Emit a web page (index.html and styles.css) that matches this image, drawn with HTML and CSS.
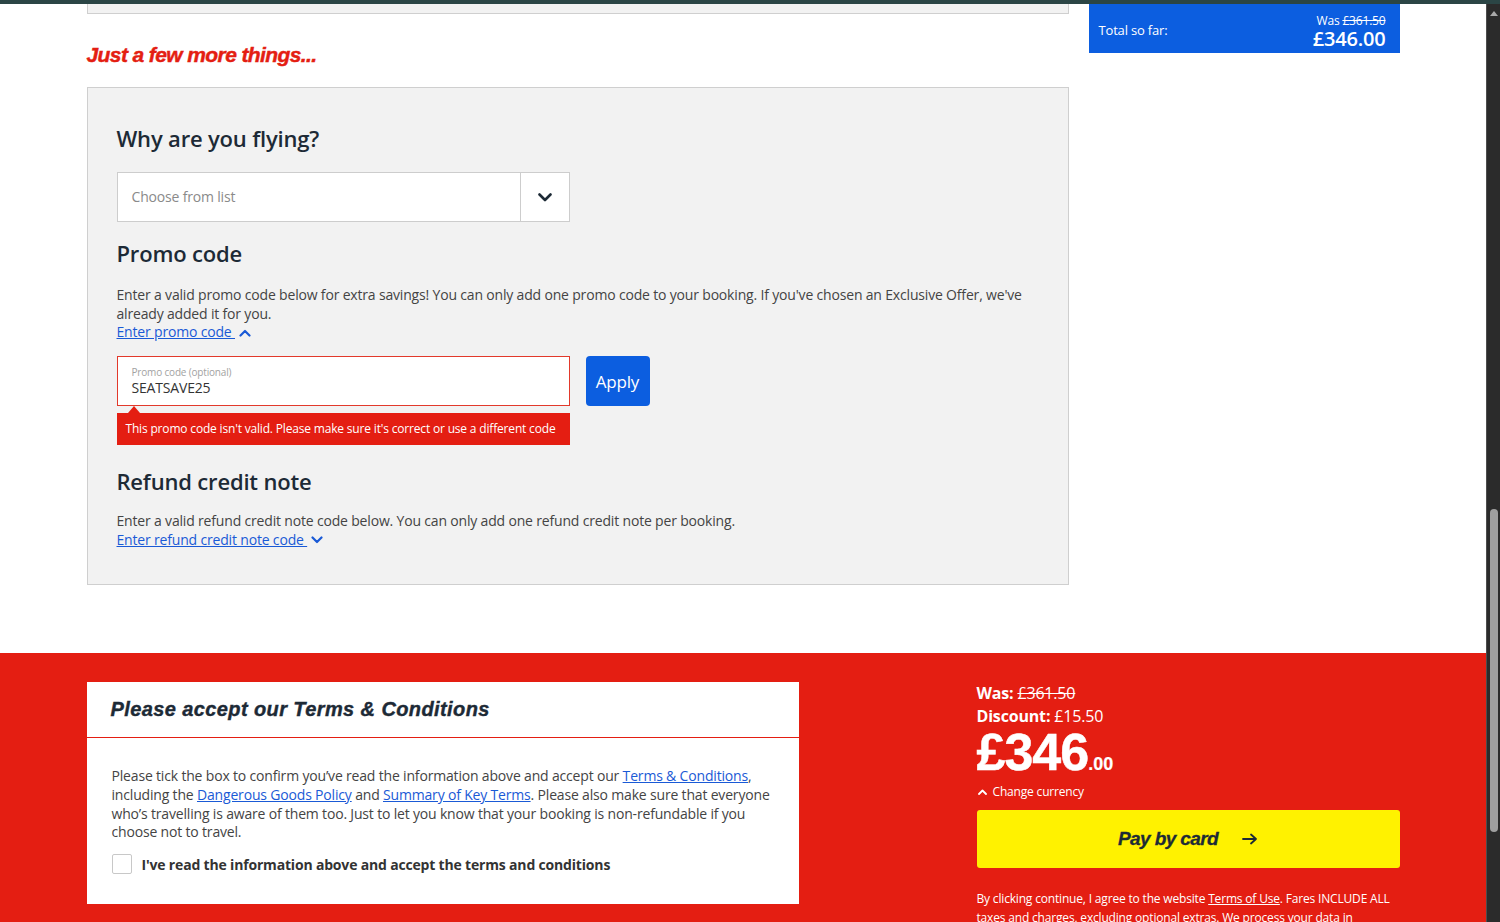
FILE: index.html
```html
<!DOCTYPE html>
<html lang="en">
<head>
<meta charset="utf-8">
<title>Booking – Just a few more things</title>
<link rel="stylesheet" href="styles.css">
</head>
<body>
<div class="topbar"></div>
<div class="window">
  <div class="page">
    <div class="container upper">
      <div class="main-col">
        <div class="prev-box"></div>
        <h1 class="section-title">Just a few more things...</h1>
        <section class="panel">
          <h2 class="panel-heading">Why are you flying?</h2>
          <div class="select">
            <span class="select-placeholder">Choose from list</span>
            <span class="select-toggle">
              <svg width="14" height="9" viewBox="0 0 14 9"><path d="M1.5 1.5l5.5 5.5 5.5-5.5" fill="none" stroke="#1d2a36" stroke-width="2.6" stroke-linecap="round" stroke-linejoin="round"/></svg>
            </span>
          </div>

          <h2 class="panel-heading heading-gap">Promo code</h2>
          <p class="panel-text">Enter a valid promo code below for extra savings! You can only add one promo code to your booking. If you've chosen an Exclusive Offer, we've already added it for you.</p>
          <div class="toggle-row">
            <a class="toggle-link" href="#">Enter promo code </a>
            <svg class="link-chevron" width="12" height="8" viewBox="0 0 12 8"><path d="M1.5 6.5l4.5-4.5 4.5 4.5" fill="none" stroke="#1a5ad6" stroke-width="2.2" stroke-linecap="round" stroke-linejoin="round"/></svg>
          </div>

          <div class="promo-row">
            <div class="promo-field">
              <div class="field-box">
                <span class="field-label">Promo code (optional)</span>
                <span class="field-value">SEATSAVE25</span>
              </div>
              <div class="field-error">This promo code isn't valid. Please make sure it's correct or use a different code</div>
            </div>
            <button class="apply-btn" type="button">Apply</button>
          </div>

          <h2 class="panel-heading refund-gap">Refund credit note</h2>
          <p class="panel-text refund-text">Enter a valid refund credit note code below. You can only add one refund credit note per booking.</p>
          <div class="toggle-row">
            <a class="toggle-link" href="#">Enter refund credit note code </a>
            <svg class="link-chevron" width="12" height="8" viewBox="0 0 12 8"><path d="M1.5 1.5l4.5 4.5 4.5-4.5" fill="none" stroke="#1a5ad6" stroke-width="2.2" stroke-linecap="round" stroke-linejoin="round"/></svg>
          </div>
        </section>
      </div>
      <aside class="side-col">
        <div class="total-box">
          <span class="total-label">Total so far:</span>
          <div class="total-prices">
            <span class="total-was">Was <s>£361.50</s></span>
            <span class="total-now">£346.00</span>
          </div>
        </div>
      </aside>
    </div>

    <div class="red-section">
      <div class="container lower">
        <div class="tc-box">
          <div class="tc-header">Please accept our Terms &amp; Conditions</div>
          <div class="tc-body">
            <p class="tc-text">Please tick the box to confirm you’ve read the information above and accept our <a href="#">Terms &amp; Conditions</a>, including the <a href="#">Dangerous Goods Policy</a> and <a href="#">Summary of Key Terms</a>. Please also make sure that everyone who’s travelling is aware of them too. Just to let you know that your booking is non-refundable if you choose not to travel.</p>
            <label class="tc-check">
              <span class="checkbox"></span>
              <span class="check-label">I've read the information above and accept the terms and conditions</span>
            </label>
          </div>
        </div>

        <div class="price-col">
          <div class="price-line"><b>Was:</b> <s>£361.50</s></div>
          <div class="price-line"><b>Discount:</b> £15.50</div>
          <div class="big-price">£346<span class="pence">.00</span></div>
          <div class="currency">
            <svg width="9" height="6" viewBox="0 0 9 6"><path d="M1 5l3.5-3.5L8 5" fill="none" stroke="#fff" stroke-width="1.8" stroke-linecap="round" stroke-linejoin="round"/></svg>
            <span>Change currency</span>
          </div>
          <button class="pay-btn" type="button">
            <span>Pay by card</span>
            <svg width="16" height="12" viewBox="0 0 16 12"><path d="M1 6h13M9 1.5L14 6l-5 4.5" fill="none" stroke="#1d2a36" stroke-width="1.8" stroke-linecap="round" stroke-linejoin="round"/></svg>
          </button>
          <p class="fineprint">By clicking continue, I agree to the website <a href="#">Terms of Use</a>. Fares INCLUDE ALL taxes and charges, excluding optional extras. We process your data in accordance with our Privacy Policy.</p>
        </div>
      </div>
    </div>
  </div>

  <div class="scrollbar">
    <div class="scroll-arrow"></div>
    <div class="scroll-thumb"></div>
  </div>
</div>
</body>
</html>
```

FILE: styles.css
```css
* { box-sizing: border-box; }

html, body {
  margin: 0;
  padding: 0;
}

body {
  width: 1500px;
  height: 922px;
  overflow: hidden;
  background: #fff;
  font-family: "Open Sans", "Liberation Sans", sans-serif;
  letter-spacing: -0.011em;
  color: #444;
}

.topbar {
  height: 4px;
  background: #2b4545;
}

.window {
  display: flex;
  height: 918px;
}

.page {
  flex: 1;
  overflow: hidden;
  background: #fff;
}

/* scrollbar */
.scrollbar {
  width: 14px;
  background: #2b2b2b;
  border-left: 1px solid #4d4d4d;
  display: flex;
  flex-direction: column;
  align-items: center;
}

.scroll-arrow {
  margin-top: 7px;
  width: 0;
  height: 0;
  border-left: 4px solid transparent;
  border-right: 4px solid transparent;
  border-bottom: 5px solid #a9a9a9;
}

.scroll-thumb {
  margin-top: 493px;
  width: 8px;
  height: 323px;
  border-radius: 4px;
  background: #9f9f9f;
}

.container {
  width: 1313px;
  margin: 0 auto;
}

/* upper area */
.upper {
  display: grid;
  grid-template-columns: 982px 311px;
  column-gap: 20px;
  align-items: start;
}

.prev-box {
  height: 10px;
  background: #f2f2f2;
  border: 1px solid #cfcfcf;
  border-top: none;
}

.section-title {
  margin: 28px 0 19px;
  font-family: "Liberation Sans", Arial, sans-serif;
  font-style: italic;
  font-weight: 700;
  font-size: 21px;
  line-height: 26px;
  letter-spacing: -0.6px;
  color: #e41e12;
  -webkit-text-stroke: 0.45px #e41e12;
}

.panel {
  background: #f2f2f2;
  border: 1px solid #cfcfcf;
  padding: 35px 29px 35px;
}

.panel-heading {
  margin: 0;
  font-size: 22px;
  line-height: 30px;
  font-weight: 600;
  color: #1d2a36;
}

.heading-gap { margin-top: 16px; }
.refund-gap { margin-top: 21px; }

.select {
  margin-top: 19px;
  width: 453px;
  height: 50px;
  display: flex;
  background: #fff;
  border: 1px solid #cdcdcd;
}

.select-placeholder {
  flex: 1;
  padding-left: 14px;
  font-size: 14px;
  line-height: 48px;
  color: #8a8a8a;
}

.select-toggle {
  width: 49px;
  border-left: 1px solid #cdcdcd;
  display: flex;
  align-items: center;
  justify-content: center;
}

.panel-text {
  margin: 18px 0 0;
  font-size: 14px;
  line-height: 18.67px;
  color: #444;
}

.refund-text {
  margin-top: 16px;
}

.toggle-row {
  display: flex;
  align-items: center;
  font-size: 14px;
  line-height: 18.67px;
}

.toggle-link {
  color: #1a5ad6;
  text-decoration: underline;
  white-space: pre;
}

.link-chevron {
  margin-left: 4px;
}

.promo-row {
  margin-top: 14px;
  display: flex;
  align-items: flex-start;
  gap: 16px;
}

.promo-field {
  width: 453px;
}

.field-box {
  height: 50px;
  background: #fff;
  border: 1px solid #e2392b;
  padding: 8px 14px 0;
  display: flex;
  flex-direction: column;
}

.field-label {
  font-size: 10px;
  line-height: 14px;
  color: #a2a2a2;
}

.field-value {
  font-size: 14px;
  line-height: 18px;
  color: #333;
}

.field-error {
  position: relative;
  margin-top: 7px;
  height: 32px;
  padding: 0 9px;
  background: #e41e12;
  color: #fff;
  font-size: 12px;
  line-height: 32px;
  white-space: nowrap;
}

.field-error::before {
  content: "";
  position: absolute;
  left: 11px;
  top: -7px;
  border-left: 6px solid transparent;
  border-right: 6px solid transparent;
  border-bottom: 7px solid #e41e12;
}

.apply-btn {
  width: 64px;
  height: 50px;
  border: none;
  border-radius: 4px;
  background: #0c5ee0;
  color: #fff;
  font-family: "Open Sans", sans-serif;
  font-size: 17px;
  letter-spacing: -0.2px;
  padding: 0;
}

/* total box */
.total-box {
  height: 49px;
  background: #0c5ee0;
  color: #fff;
  display: flex;
  justify-content: space-between;
  padding: 0 14px 0 10px;
}

.total-label {
  align-self: center;
  font-size: 13px;
  margin-top: 3px;
}

.total-prices {
  padding-top: 10px;
  display: flex;
  flex-direction: column;
  align-items: flex-end;
}

.total-was {
  font-size: 12px;
  line-height: 14px;
}

.total-now {
  font-size: 20px;
  line-height: 22px;
  font-weight: 600;
}

/* red section */
.red-section {
  margin-top: 68px;
  background: #e41e12;
  padding-top: 29px;
  height: 400px;
}

.lower {
  display: flex;
  justify-content: space-between;
  align-items: flex-start;
}

.tc-box {
  width: 712px;
  background: #fff;
}

.tc-header {
  height: 56px;
  padding: 0 24px;
  border-bottom: 1px solid #e41e12;
  font-family: "Liberation Sans", Arial, sans-serif;
  font-style: italic;
  font-weight: 700;
  font-size: 20px;
  line-height: 55px;
  letter-spacing: 0.4px;
  color: #1d2a36;
  -webkit-text-stroke: 0.4px #1d2a36;
}

.tc-body {
  padding: 29px 25px 30px;
}

.tc-text {
  margin: 0;
  font-size: 14px;
  line-height: 18.67px;
  color: #444;
}

.tc-text a {
  color: #1a5ad6;
}

.tc-check {
  margin-top: 12px;
  display: flex;
  align-items: center;
  gap: 10px;
}

.checkbox {
  width: 20px;
  height: 20px;
  border: 1px solid #c8c8c8;
  border-radius: 2px;
  background: #fff;
}

.check-label {
  font-size: 14px;
  font-weight: 700;
  color: #333;
}

/* price column */
.price-col {
  width: 423px;
  color: #fff;
}

.price-line {
  font-size: 16px;
  line-height: 23px;
}

.price-line b { font-weight: 700; }

.big-price {
  font-family: "Liberation Sans", Arial, sans-serif;
  font-weight: 700;
  font-size: 52px;
  line-height: 42px;
  padding-top: 3px;
  letter-spacing: -1px;
  -webkit-text-stroke: 0.5px #fff;
}

.pence {
  font-size: 18px;
  letter-spacing: 0;
  -webkit-text-stroke: 0.2px #fff;
}

.currency {
  margin-top: -1px;
  display: flex;
  align-items: center;
  gap: 6px;
  font-size: 12px;
  line-height: 16px;
  padding-left: 1px;
}

.pay-btn {
  margin-top: 10px;
  width: 100%;
  height: 58px;
  border: none;
  border-radius: 3px;
  background: #fff200;
  display: flex;
  align-items: center;
  justify-content: center;
  gap: 24px;
  font-family: "Liberation Sans", Arial, sans-serif;
  font-style: italic;
  font-weight: 700;
  font-size: 19px;
  letter-spacing: -0.6px;
  color: #1d2a36;
  -webkit-text-stroke: 0.3px #1d2a36;
  padding: 0;
}

.fineprint {
  margin: 21px 0 0;
  font-size: 12px;
  line-height: 19px;
  color: #fff;
}

.fineprint a {
  color: #fff;
}
```
